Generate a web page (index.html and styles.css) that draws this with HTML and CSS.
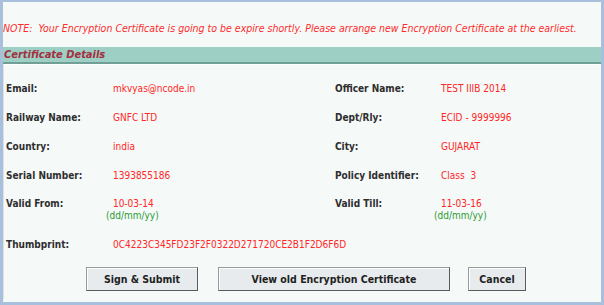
FILE: index.html
```html
<!DOCTYPE html>
<html>
<head>
<meta charset="utf-8">
<link rel="stylesheet" href="styles.css">
</head>
<body>
<div class="frame">
  <p class="note">NOTE:&nbsp; Your Encryption Certificate is going to be expire shortly. Please arrange new Encryption Certificate at the earliest.</p>
  <div class="panel">
    <div class="bar">Certificate Details</div>
    <div class="body">
      <div class="grid">
        <div class="lbl">Email:</div><div class="val">mkvyas@ncode.in</div>
        <div class="lbl">Officer Name:</div><div class="val">TEST IIIB 2014</div>
        <div class="lbl">Railway Name:</div><div class="val">GNFC LTD</div>
        <div class="lbl">Dept/Rly:</div><div class="val">ECID - 9999996</div>
        <div class="lbl">Country:</div><div class="val">india</div>
        <div class="lbl">City:</div><div class="val">GUJARAT</div>
        <div class="lbl">Serial Number:</div><div class="val">1393855186</div>
        <div class="lbl">Policy Identifier:</div><div class="val">Class&nbsp; 3</div>
        <div class="lbl">Valid From:</div><div class="val"><span class="date"><span>10-03-14</span><span class="fmt">(dd/mm/yy)</span></span></div>
        <div class="lbl">Valid Till:</div><div class="val"><span class="date"><span>11-03-16</span><span class="fmt">(dd/mm/yy)</span></span></div>
        <div class="lbl">Thumbprint:</div><div class="val wide">0C4223C345FD23F2F0322D271720CE2B1F2D6F6D</div>
      </div>
      <div class="actions">
        <button class="btn b1">Sign &amp; Submit</button>
        <button class="btn b2">View old Encryption Certificate</button>
        <button class="btn b3">Cancel</button>
      </div>
    </div>
  </div>
</div>
</body>
</html>
```
FILE: styles.css
```css
* { box-sizing: border-box; }
html, body { margin: 0; padding: 0; background: #ffffff; }
body { font-family: "DejaVu Sans Condensed", "DejaVu Sans", sans-serif; font-size: 10px; }
.frame {
  width: 604px;
  height: 305px;
  background: #f5f9f8;
  border: 3px solid #a9c0dc;
  border-top-width: 2px;
}
.note {
  margin: 0;
  padding: 20px 0 0 0;
  height: 45px;
  color: #ff2b2b;
  font-style: italic;
  font-size: 10.5px;
  line-height: 12px;
}
.bar {
  height: 17px;
  background: #9dcfc5;
  border-bottom: 2px solid #6f9f95;
  color: #a3303e;
  font-weight: bold;
  font-style: italic;
  font-size: 11px;
  line-height: 16px;
  padding-left: 1px;
}
.body {
  border-left: 1px solid #dde3e3;
  border-top: 1px solid #ffffff;
  height: 236px;
}
.grid {
  display: grid;
  grid-template-columns: 107px 222px 106px 1fr;
  grid-template-rows: 29px 29px 29px 28px 41px 22px;
  padding: 18px 0 0 2px;
}
.lbl { color: #2e2e2e; font-weight: bold; line-height: 12px; }
.val { color: #ff2626; line-height: 12px; }
.wide { grid-column: 2 / 5; }
.date { display: inline-flex; flex-direction: column; align-items: center; margin-left: -7px; }
.date span:first-child { padding-left: 2px; }
.fmt { color: #2c9a35; }
.actions {
  display: flex;
  padding: 6px 0 0 82px;
}
.btn {
  height: 24px;
  background: #e7ebee;
  border: 1px solid #5a5a5a;
  border-top-color: #9a9a9a;
  border-left-color: #9a9a9a;
  box-shadow: inset 1px 1px 0 #ffffff;
  font-family: "DejaVu Sans Condensed", "DejaVu Sans", sans-serif;
  font-weight: bold;
  font-size: 10.5px;
  color: #222222;
  padding: 0;
  flex: none;
}
.b1 { width: 112px; }
.b2 { width: 232px; margin-left: 20px; }
.b3 { width: 58px; margin-left: 18px; }
```
